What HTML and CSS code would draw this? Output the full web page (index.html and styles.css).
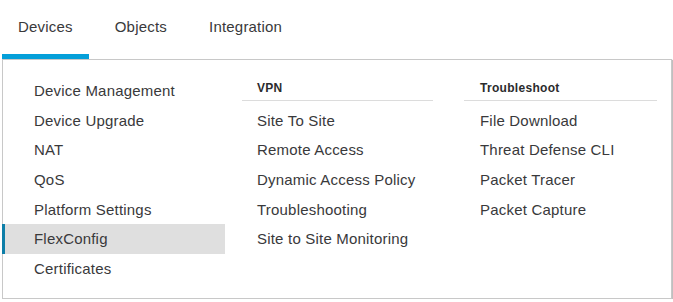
FILE: index.html
```html
<!DOCTYPE html>
<html lang="en">
<head>
  <meta charset="UTF-8">
  <title>Devices Menu</title>
  <link rel="stylesheet" href="styles.css">
</head>
<body>

  <div class="pagina">
    <nav class="tabs">
      <a class="tab activo">Devices</a>
      <a class="tab">Objects</a>
      <a class="tab">Integration</a>
    </nav>

    <div class="menu">
      <ul class="columna principal">
        <li>Device Management</li>
        <li>Device Upgrade</li>
        <li>NAT</li>
        <li>QoS</li>
        <li>Platform Settings</li>
        <li class="seleccionado">FlexConfig</li>
        <li>Certificates</li>
      </ul>

      <ul class="columna vpn">
        <li class="titulo">VPN</li>
        <li>Site To Site</li>
        <li>Remote Access</li>
        <li>Dynamic Access Policy</li>
        <li>Troubleshooting</li>
        <li>Site to Site Monitoring</li>
      </ul>

      <ul class="columna troubleshoot">
        <li class="titulo">Troubleshoot</li>
        <li>File Download</li>
        <li>Threat Defense CLI</li>
        <li>Packet Tracer</li>
        <li>Packet Capture</li>
      </ul>
    </div>
  </div>

</body>
</html>
```

FILE: styles.css
```css
body {
  margin: 0;
  background-color: white;
  font-family: "Liberation Sans", Arial, sans-serif;
  color: #39393b;
}
.pagina {
  margin: 0 1px 0 2px;
}
.tabs {
  display: flex;
  gap: 10px;
  height: 59px;
}
.tab {
  box-sizing: border-box;
  height: 59px;
  padding: 0 16px;
  line-height: 54px;
  font-size: 15px;
  letter-spacing: 0.2px;
  border-bottom: 5px solid transparent;
}
.tab.activo {
  border-bottom-color: #049fd9;
}
.menu {
  display: flex;
  height: 240px;
  box-sizing: border-box;
  padding: 16px 0 14px 0;
  border: 1px solid #c8c8c8;
  box-shadow: 1px 1px 1px rgba(0,0,0,0.25);
}
.columna {
  list-style: none;
  margin: 0;
  padding: 0;
}
.columna li {
  height: 29.7px;
  line-height: 29.7px;
  font-size: 15px;
  letter-spacing: 0.2px;
  padding-left: 15px;
}
.principal {
  width: 223px;
  margin-left: -1px;
}
.principal li {
  padding-left: 29px;
  border-left: 3px solid transparent;
}
.principal li.seleccionado {
  background-color: #dfdfdf;
  border-left-color: #0d7ea8;
}
.vpn {
  width: 191px;
  margin-left: 17px;
}
.troubleshoot {
  width: 193px;
  margin-left: 31px;
}
.troubleshoot li {
  padding-left: 16px;
}
.columna li.titulo {
  height: 24px;
  line-height: 24px;
  margin-bottom: 4.7px;
  font-size: 12px;
  font-weight: bold;
  letter-spacing: 0.3px;
  border-bottom: 1px solid #dcdcdc;
  color: #2b2b2d;
}
```
